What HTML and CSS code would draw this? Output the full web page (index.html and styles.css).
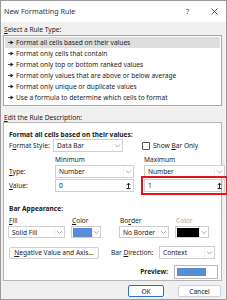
FILE: index.html
```html
<html>
	<head>
		<meta charset="utf-8" />
		<title>New Formatting Rule</title>
		<link rel="stylesheet" href="styles.css">
	</head>
	<body>
		<div class="dialog">
			<div class="titlebar">
				<span class="title">New Formatting Rule</span>
				<span class="tb-help">?</span>
				<span class="tb-close">
					<svg width="7" height="7" viewBox="0 0 7 7"><path d="M0.5 0.5L6.5 6.5M6.5 0.5L0.5 6.5" stroke="#333" stroke-width="0.8" fill="none"/></svg>
				</span>
			</div>
			<div class="content">
				<div class="caption"><u>S</u>elect a Rule Type:</div>
				<ul class="rule-list">
					<li class="selected"><span class="arrow"></span>Format all cells based on their values</li>
					<li><span class="arrow"></span>Format only cells that contain</li>
					<li><span class="arrow"></span>Format only top or bottom ranked values</li>
					<li><span class="arrow"></span>Format only values that are above or below average</li>
					<li><span class="arrow"></span>Format only unique or duplicate values</li>
					<li><span class="arrow"></span>Use a formula to determine which cells to format</li>
				</ul>
				<div class="caption second"><u>E</u>dit the Rule Description:</div>
				<div class="desc-box">
					<div class="bold">Format all cells based on their values:</div>
					<div class="style-row">
						<span class="style-label">F<u>o</u>rmat Style:</span>
						<div class="dropdown style-select">Data Bar<span class="chev"></span></div>
						<span class="checkbox"></span>
						<span>Show <u>B</u>ar Only</span>
					</div>
					<div class="minmax">
						<span></span>
						<span class="col-head">Minimum</span>
						<span class="col-head">Maximum</span>
						<span class="row-label"><u>T</u>ype:</span>
						<div class="dropdown">Number<span class="chev"></span></div>
						<div class="dropdown">Number<span class="chev"></span></div>
						<span class="row-label"><u>V</u>alue:</span>
						<div class="value-input">0<span class="pick"></span></div>
						<div class="value-input marked">1<span class="pick"></span></div>
					</div>
					<div class="bold bar-head">Bar Appearance:</div>
					<div class="appearance">
						<span><u>F</u>ill</span>
						<span><u>C</u>olor</span>
						<span>Bo<u>r</u>der</span>
						<span class="disabled">Color</span>
						<div class="dropdown">Solid Fill<span class="chev"></span></div>
						<div class="dropdown swatch-select"><span class="swatch blue"></span><span class="chev"></span></div>
						<div class="dropdown">No Border<span class="chev"></span></div>
						<div class="dropdown swatch-select"><span class="swatch black"></span><span class="chev"></span></div>
					</div>
					<div class="direction-row">
						<span class="button negative"><u>N</u>egative Value and Axis...</span>
						<span class="dir-label">Bar <u>D</u>irection:</span>
						<div class="dropdown dir-select">Context<span class="chev"></span></div>
					</div>
					<div class="preview-row">
						<span class="bold">Preview:</span>
						<span class="preview"><span class="preview-bar"></span></span>
					</div>
				</div>
				<div class="buttons">
					<span class="button ok">OK</span>
					<span class="button cancel">Cancel</span>
				</div>
			</div>
		</div>
	</body>
</html>
```

FILE: styles.css
```css
body {
	margin: 0;
	font-family: "Noto Sans", "Open Sans", sans-serif;
	font-size: 6.6px;
	line-height: 9px;
	color: #1b1b1b;
}

u {
	text-decoration-thickness: 0.5px;
	text-underline-offset: 1px;
}

.dialog {
	width: 227px;
	height: 300px;
	box-sizing: border-box;
	border: 1px solid #9a9a9a;
	background: #f0f0f0;
	display: flex;
	flex-direction: column;
}

.titlebar {
	height: 21px;
	background: #fff;
	display: flex;
	align-items: center;
	padding-left: 3px;
	font-size: 7.2px;
	color: #333;
}

.title {
	flex: 1;
}

.tb-help {
	width: 12px;
	margin-right: 13px;
	color: #444;
}

.tb-close {
	width: 7px;
	margin-right: 8px;
	display: flex;
}

.content {
	padding: 0 4px 0 2px;
}

.caption {
	margin-top: 3px;
	padding-left: 1px;
}

.caption.second {
	margin-top: 7px;
}

.rule-list {
	list-style: none;
	margin: 1px 0 0 0;
	padding: 1px 1px 2px 1px;
	background: #fff;
	border: 1px solid #a8a8a8;
	height: 66px;
}

.rule-list li {
	height: 11px;
	line-height: 11px;
	padding-left: 3px;
	white-space: nowrap;
	display: flex;
	align-items: center;
}

.rule-list li.selected {
	background: #dedede;
}

.arrow {
	width: 8px;
	height: 5px;
	flex: none;
	background: url("data:image/svg+xml,%3Csvg xmlns='http://www.w3.org/2000/svg' width='6' height='5'%3E%3Cpath d='M0 2.5H3' stroke='%23222' stroke-width='0.8'/%3E%3Cpath d='M2.5 0.6L5.6 2.5L2.5 4.4Z' fill='%23222'/%3E%3C/svg%3E") left center no-repeat;
}

.desc-box {
	background: #fff;
	border: 1px solid #b4b4b4;
	padding: 8px 5px 1px 4px;
}

.bold {
	font-weight: bold;
	height: 8px;
	line-height: 8px;
	padding-left: 1px;
}

.style-row {
	display: flex;
	align-items: center;
	height: 13px;
}

.style-label {
	width: 44px;
	padding-left: 1px;
}

.dropdown {
	box-sizing: border-box;
	height: 13px;
	border: 1px solid #cfcfcf;
	background: #fff;
	display: flex;
	align-items: center;
	padding-left: 3px;
	white-space: nowrap;
}

.chev {
	margin-left: auto;
	width: 9px;
	height: 100%;
	background: url("data:image/svg+xml,%3Csvg xmlns='http://www.w3.org/2000/svg' width='9' height='11'%3E%3Cpath d='M2 4.5L4.5 7L7 4.5' stroke='%23888' stroke-width='0.7' fill='none'/%3E%3C/svg%3E") center no-repeat;
	border-left: 1px solid #f2f2f2;
}

.style-select {
	width: 70px;
	margin-right: 19px;
}

.checkbox {
	box-sizing: border-box;
	width: 8px;
	height: 8px;
	border: 1px solid #555;
	border-radius: 1px;
	margin-right: 3px;
}

.minmax {
	display: grid;
	grid-template-columns: 37px 79px 81px;
	grid-template-rows: 9px 13px 13px;
	column-gap: 10px;
	row-gap: 1px;
	margin-top: 3px;
	align-items: center;
}

.minmax .col-head {
	align-self: end;
}

.row-label {
	padding-left: 1px;
}

.value-input {
	box-sizing: border-box;
	height: 13px;
	border: 1px solid #cfcfcf;
	display: flex;
	align-items: center;
	padding-left: 3px;
}

.value-input.marked {
	outline: 2px solid #e3131b;
	outline-offset: 1px;
}

.pick {
	margin-left: auto;
	width: 9px;
	height: 100%;
	background: url("data:image/svg+xml,%3Csvg xmlns='http://www.w3.org/2000/svg' width='9' height='11'%3E%3Cpath d='M4.5 3.2V8M2.6 5.2L4.5 3.2L6.4 5.2M2.4 8.6H6.6' stroke='%23222' stroke-width='1' fill='none'/%3E%3C/svg%3E") center no-repeat;
}

.bar-head {
	margin-top: 13px;
}

.appearance {
	display: grid;
	grid-template-columns: 57px 36px 56px 34px;
	grid-template-rows: 9px 12px;
	column-gap: 6px;
	row-gap: 1px;
	margin-top: 3px;
	align-items: center;
}

.appearance .dropdown {
	height: 12px;
}

.appearance > span {
	padding-left: 1px;
}

.disabled {
	color: #a3a3a3;
}

.appearance > :nth-child(2),
.appearance > :nth-child(6) {
	margin-right: 6px;
}

.appearance > :nth-child(3),
.appearance > :nth-child(7) {
	margin-left: 6px;
}

.swatch-select {
	padding-left: 1px;
}

.swatch {
	width: 24px;
	height: 9px;
}

.swatch.blue {
	background: #5a8bd6;
}

.swatch.black {
	background: #000;
}

.button {
	box-sizing: border-box;
	display: flex;
	align-items: center;
	justify-content: center;
	height: 12px;
	border: 1px solid #d0d0d0;
	border-radius: 2px;
	background: #fdfdfd;
	white-space: nowrap;
}

.direction-row {
	display: flex;
	align-items: center;
	margin-top: 8px;
	height: 13px;
}

.negative {
	width: 90px;
	margin-left: 1px;
	margin-right: 12px;
}

.dir-label {
	width: 48px;
}

.dir-select {
	width: 56px;
}

.preview-row {
	display: flex;
	justify-content: flex-end;
	align-items: center;
	margin-top: 6px;
	margin-right: -2px;
	height: 14px;
}

.preview-row .bold {
	margin-right: 6px;
}

.preview {
	box-sizing: border-box;
	width: 44px;
	height: 14px;
	border: 1px solid #b8b8b8;
	padding: 2px;
	display: flex;
}

.preview-bar {
	width: 29px;
	background: #5a8bd6;
}

.buttons {
	display: flex;
	justify-content: flex-end;
	gap: 14px;
	margin-top: 4px;
	margin-right: 1px;
}

.ok {
	width: 36px;
	border-color: #2a6fc9;
}

.cancel {
	width: 43px;
}
```
